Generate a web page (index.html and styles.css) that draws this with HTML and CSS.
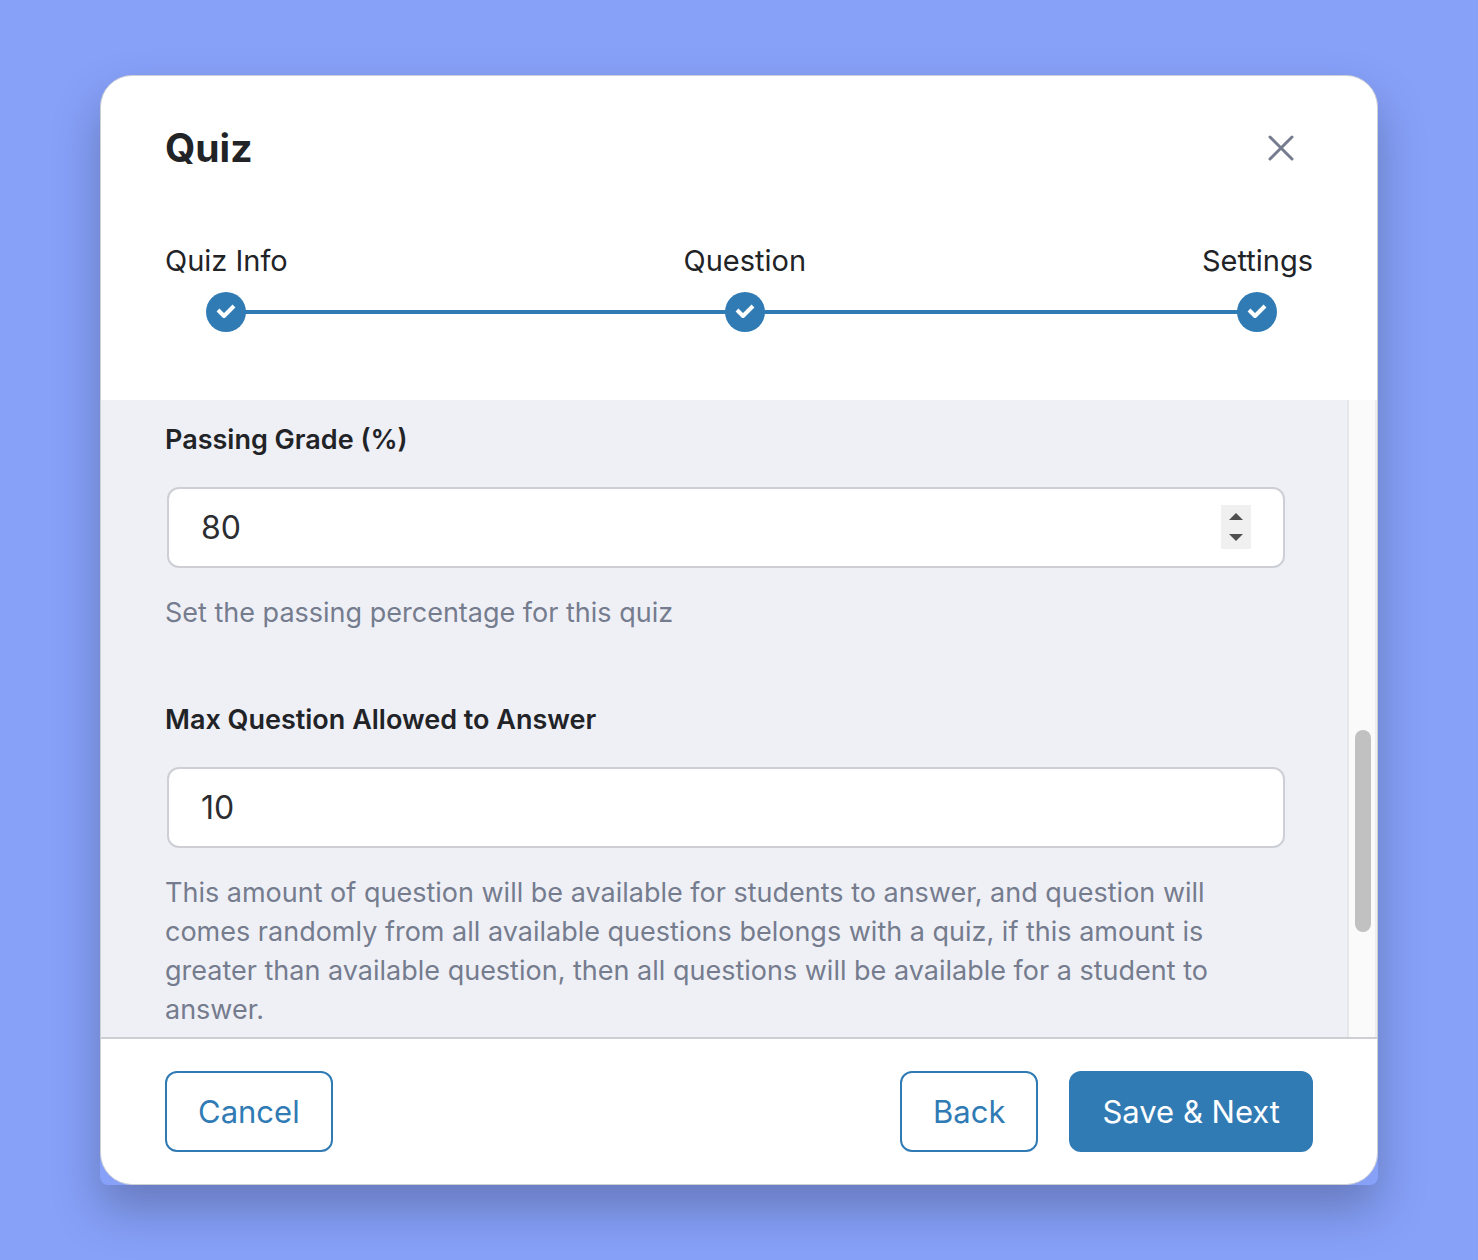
FILE: index.html
```html
<!DOCTYPE html>
<html lang="en">
<head>
    <meta charset="UTF-8">
    <meta name="viewport" content="width=device-width, initial-scale=1.0">
    <title>Quiz</title>
    <link rel="stylesheet" href="styles.css">
</head>
<body>
    <div class="modal-shadow">
        <form class="modal">
            <header class="modal-header">
                <h1>Quiz</h1>
                <button type="button" class="close-btn" aria-label="Close">
                    <svg width="28" height="28" viewBox="0 0 28 28" fill="none" stroke="currentColor" stroke-width="3" stroke-linecap="round">
                        <path d="M3 3L25 25M25 3L3 25"/>
                    </svg>
                </button>
            </header>

            <ol class="steps">
                <li class="step">
                    <span>Quiz Info</span>
                    <span class="step-dot">
                        <svg width="20" height="16" viewBox="0 0 20 16" fill="none" stroke="currentColor" stroke-width="4" stroke-linejoin="round">
                            <path d="M2 6L8 12L18 2"/>
                        </svg>
                    </span>
                </li>
                <li class="step">
                    <span>Question</span>
                    <span class="step-dot">
                        <svg width="20" height="16" viewBox="0 0 20 16" fill="none" stroke="currentColor" stroke-width="4" stroke-linejoin="round">
                            <path d="M2 6L8 12L18 2"/>
                        </svg>
                    </span>
                </li>
                <li class="step">
                    <span>Settings</span>
                    <span class="step-dot">
                        <svg width="20" height="16" viewBox="0 0 20 16" fill="none" stroke="currentColor" stroke-width="4" stroke-linejoin="round">
                            <path d="M2 6L8 12L18 2"/>
                        </svg>
                    </span>
                </li>
            </ol>

            <div class="modal-body">
                <div class="fields">
                    <div class="field">
                        <label for="passingGrade">Passing Grade (%)</label>
                        <div class="input-wrap">
                            <input type="number" id="passingGrade" value="80">
                            <span class="spinner">
                                <svg width="14" height="7" viewBox="0 0 14 7"><path d="M0 7L7 0L14 7Z"/></svg>
                                <svg width="14" height="7" viewBox="0 0 14 7"><path d="M0 0L7 7L14 0Z"/></svg>
                            </span>
                        </div>
                        <p>Set the passing percentage for this quiz</p>
                    </div>
                    <div class="field">
                        <label for="maxQuestion">Max Question Allowed to Answer</label>
                        <div class="input-wrap">
                            <input type="number" id="maxQuestion" value="10">
                        </div>
                        <p>This amount of question will be available for students to answer, and question will comes randomly from all available questions belongs with a quiz, if this amount is greater than available question, then all questions will be available for a student to answer.</p>
                    </div>
                </div>
                <div class="scrollbar">
                    <div class="scrollbar-thumb"></div>
                </div>
            </div>

            <footer class="modal-footer">
                <button type="button" class="btn">Cancel</button>
                <div class="btn-group">
                    <button type="button" class="btn">Back</button>
                    <button type="submit" class="btn btn-primary">Save &amp; Next</button>
                </div>
            </footer>
        </form>
    </div>
</body>
</html>
```
FILE: styles.css
```css
* {
    margin: 0;
    padding: 0;
    box-sizing: border-box;
}

body {
    font-family: Inter, sans-serif;
    background: #87a1f9;
    min-height: 100vh;
    padding: 75px 100px;
    display: flex;
    color: #212327;
}

.modal-shadow {
    flex: 1;
    display: flex;
    background: #87a1f9;
    border-radius: 32px 32px 8px 8px;
    box-shadow: 0 24px 48px rgba(0, 0, 0, 0.25);
}

.modal {
    flex: 1;
    display: flex;
    flex-direction: column;
    background: white;
    border: 1px solid #cdcfd5;
    border-radius: 32px;
    overflow: hidden;
}

.modal-header {
    display: flex;
    justify-content: space-between;
    align-items: center;
    padding: 40px 64px 0;
}

h1 {
    font-size: 39px;
    line-height: 50px;
    font-weight: bold;
}

.close-btn {
    display: flex;
    padding: 18px;
    border: none;
    background: none;
    color: #757c8e;
    cursor: pointer;
}

/* steps */
.steps {
    position: relative;
    display: flex;
    justify-content: space-between;
    list-style: none;
    margin: 61px 64px 68px;
}

.steps::before {
    content: "";
    position: absolute;
    left: 60px;
    right: 60px;
    bottom: 18px;
    height: 4px;
    background: #317bb5;
}

.step {
    position: relative;
    display: flex;
    flex-direction: column;
    align-items: center;
    gap: 12px;
    font-size: 29px;
    line-height: 39px;
}

.step-dot {
    display: flex;
    justify-content: center;
    align-items: center;
    width: 40px;
    height: 40px;
    border-radius: 50%;
    background: #317bb5;
    color: white;
}

/* body */
.modal-body {
    flex: 1;
    display: flex;
    background: #eff0f6;
}

.fields {
    flex: 1;
    display: flex;
    flex-direction: column;
    gap: 68px;
    padding: 20px 60px 8px 64px;
}

.field {
    font-size: 27px;
    line-height: 39px;
}

.field label {
    display: block;
    font-weight: 600;
}

.field p {
    color: #757c8e;
}

.input-wrap {
    position: relative;
    margin: 28px 2px 25px;
}

input {
    display: block;
    width: 100%;
    height: 81px;
    padding: 0 32px;
    border: 2px solid #cdcfd5;
    border-radius: 12px;
    background: white;
    font-family: inherit;
    font-size: 32px;
    color: #2b2d31;
    appearance: textfield;
}

input::-webkit-inner-spin-button {
    appearance: none;
}

.spinner {
    position: absolute;
    top: 18px;
    right: 34px;
    display: flex;
    flex-direction: column;
    justify-content: center;
    align-items: center;
    gap: 14px;
    width: 30px;
    height: 44px;
    background: #f0f0f0;
    fill: #4f4f4f;
}

.scrollbar {
    width: 30px;
    padding: 330px 4px 0 6px;
    background: #fafafa;
    border-left: 2px solid #e7e7e9;
    border-right: 2px solid #ededed;
}

.scrollbar-thumb {
    width: 16px;
    height: 202px;
    border-radius: 8px;
    background: #c1c1c1;
}

/* footer */
.modal-footer {
    display: flex;
    justify-content: space-between;
    padding: 32px 64px;
    border-top: 2px solid #cdcfd5;
}

.btn-group {
    display: flex;
    gap: 31px;
}

.btn {
    height: 81px;
    padding: 0 31px;
    border: 2px solid #317bb5;
    border-radius: 12px;
    background: white;
    color: #317bb5;
    font-family: inherit;
    font-size: 31px;
    cursor: pointer;
}

.btn-primary {
    background: #317bb5;
    color: white;
}
```
